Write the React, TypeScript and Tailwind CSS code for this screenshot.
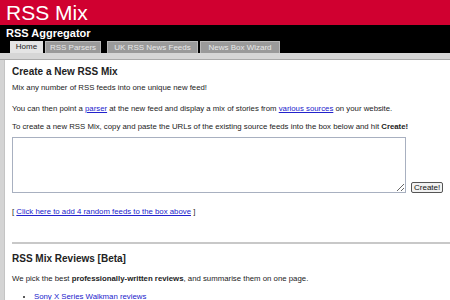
const tabs = [
  { label: "Home", w: "w-[33px]", active: true, ml: "ml-[10px]" },
  { label: "RSS Parsers", w: "w-[56px]", active: false, ml: "ml-[2px]" },
  { label: "UK RSS News Feeds", w: "w-[91px]", active: false, ml: "ml-[6px]" },
  { label: "News Box Wizard", w: "w-[80px]", active: false, ml: "ml-[2px]" },
];

export default function App() {
  return (
    <div className="w-[450px] h-[300px] overflow-hidden bg-white font-['Liberation_Sans',Arial,sans-serif] text-[#222]">
      <header>
        <div className="h-[25px] bg-[#d00030] px-[6px]">
          <div className="text-[21px] leading-[25px] text-white">RSS Mix</div>
        </div>
        <div className="h-[28px] bg-black flex flex-col">
          <div className="px-[6px] pt-[2px] text-[11px] leading-[12px] font-bold text-white">
            RSS Aggregator
          </div>
          <div className="mt-auto flex items-end">
            {tabs.map((t) => (
              <div
                key={t.label}
                className={
                  t.active
                    ? `${t.w} ${t.ml} h-[12px] bg-[#e4e4e4] text-[#222] text-[8px] leading-[12px] text-center`
                    : `${t.w} ${t.ml} h-[12px] bg-[#9a9a9a] border border-[#b8b8b8] border-b-0 text-[#e8e8e8] text-[8px] leading-[11px] text-center`
                }
              >
                {t.label}
              </div>
            ))}
          </div>
        </div>
        <div className="h-[7px] bg-[#d6d6d6] border-b border-[#aaa]" />
      </header>
      <div className="flex">
        <div className="w-[5px] h-[250px] bg-[#d4d4d4] border-r border-[#c4c4c4]" />
        <main className="flex-1 pl-[7px] pt-[5px] text-[7.8px] leading-[10px]">
          <h1 className="text-[10px] leading-[14px] font-bold text-[#222]">Create a New RSS Mix</h1>
          <p className="mt-[4px]">Mix any number of RSS feeds into one unique new feed!</p>
          <p className="mt-[11px]">
            You can then point a <a className="text-[#2222cc] underline">parser</a> at the new feed and
            display a mix of stories from <a className="text-[#2222cc] underline">various sources</a> on
            your website.
          </p>
          <p className="mt-[8px]">
            To create a new RSS Mix, copy and paste the URLs of the existing source feeds into the box
            below and hit <b>Create!</b>
          </p>
          <div className="mt-[5px] flex items-end gap-[5px]">
            <textarea className="w-[394px] h-[56px] border border-[#a8b0c0] bg-white resize" />
            <button className="h-[11px] px-[2px] border border-[#555] rounded-[2px] bg-[#f2f2f2] text-[8px] leading-[9px] text-[#111]">
              Create!
            </button>
          </div>
          <p className="mt-[14px]">
            [ <a className="text-[#2222cc] underline">Click here to add 4 random feeds to the box above</a> ]
          </p>
          <hr className="mt-[25px] border-0 h-[2px] bg-[#c8c8c8]" />
          <h2 className="mt-[8px] text-[10px] leading-[14px] font-bold">RSS Mix Reviews [Beta]</h2>
          <p className="mt-[8px]">
            We pick the best <b>professionally-written reviews</b>, and summarise them on one page.
          </p>
          <ul className="mt-[8px] pl-[22px] list-disc">
            <li>
              <a className="text-[#2222cc] underline">Sony X Series Walkman reviews</a>
            </li>
          </ul>
        </main>
      </div>
    </div>
  );
}
